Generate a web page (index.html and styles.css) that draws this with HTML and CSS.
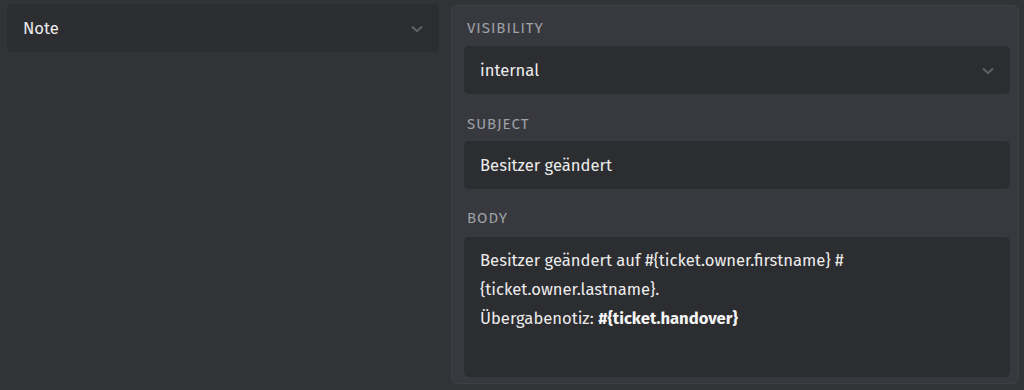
FILE: index.html
```html
<!DOCTYPE html>
<html lang="de">
<head>
<meta charset="utf-8">
<link rel="stylesheet" href="styles.css">
</head>
<body>
<div class="page">
  <div class="left">
    <div class="select">
      <span class="value">Note</span>
      <svg class="chev" width="12" height="8" viewBox="0 0 12 8"><path d="M1 1.5 L6 6.2 L11 1.5" fill="none" stroke="#5f6166" stroke-width="2"/></svg>
    </div>
  </div>
  <div class="panel">
    <div class="field f-vis">
      <div class="label">Visibility</div>
      <div class="select">
        <span class="value">internal</span>
        <svg class="chev" width="12" height="8" viewBox="0 0 12 8"><path d="M1 1.5 L6 6.2 L11 1.5" fill="none" stroke="#5f6166" stroke-width="2"/></svg>
      </div>
    </div>
    <div class="field f-subj">
      <div class="label">Subject</div>
      <div class="input"><span class="value">Besitzer geändert</span></div>
    </div>
    <div class="field f-body">
      <div class="label">Body</div>
      <div class="textarea">
        <p>Besitzer geändert auf #{ticket.owner.firstname} #<br>{ticket.owner.lastname}.</p>
        <p>Übergabenotiz: <strong>#{ticket.handover}</strong></p>
      </div>
    </div>
  </div>
</div>
</body>
</html>
```
FILE: styles.css
```css
* { box-sizing: border-box; }
html, body { margin: 0; padding: 0; }
body {
  background: #323337;
  font-family: "Fira Sans", Lato, "Open Sans", sans-serif;
  color: #eaeaea;
  width: 1024px;
  height: 390px;
  overflow: hidden;
}
.page {
  display: flex;
  align-items: flex-start;
  gap: 12px;
  padding: 4px 5px 0 7px;
}
.left { width: 432px; }
.select, .input {
  height: 48px;
  background: #2c2d31;
  border-radius: 5px;
  display: flex;
  align-items: center;
  justify-content: space-between;
  padding: 0 16px;
  font-size: 16.6px;
}
.value { color: #ececec; }
.chev { display: block; margin-top: 2px; }
.panel {
  flex: 1;
  margin-top: 1px;
  background: #38393e;
  border: 1px solid #3e3f44;
  border-radius: 6px;
  padding: 12px 8px 6px 12px;
  display: flex;
  flex-direction: column;
}
.f-subj { margin-top: 20px; }
.f-body { margin-top: 19px; }
.label {
  font-size: 15px;
  line-height: 20px;
  letter-spacing: 1px;
  text-transform: uppercase;
  color: #9ea1a6;
  padding-left: 3px;
  margin-bottom: 8px;
}
.f-subj .label { margin-bottom: 7px; }
.f-body .label { margin-bottom: 9px; }
.textarea {
  height: 140px;
  background: #2c2d31;
  border-radius: 5px;
  padding: 9px 16px;
  font-size: 16.6px;
  line-height: 29px;
  color: #ececec;
}
.textarea p { margin: 0; }
.textarea strong { font-weight: 700; color: #f4f4f4; }
```
